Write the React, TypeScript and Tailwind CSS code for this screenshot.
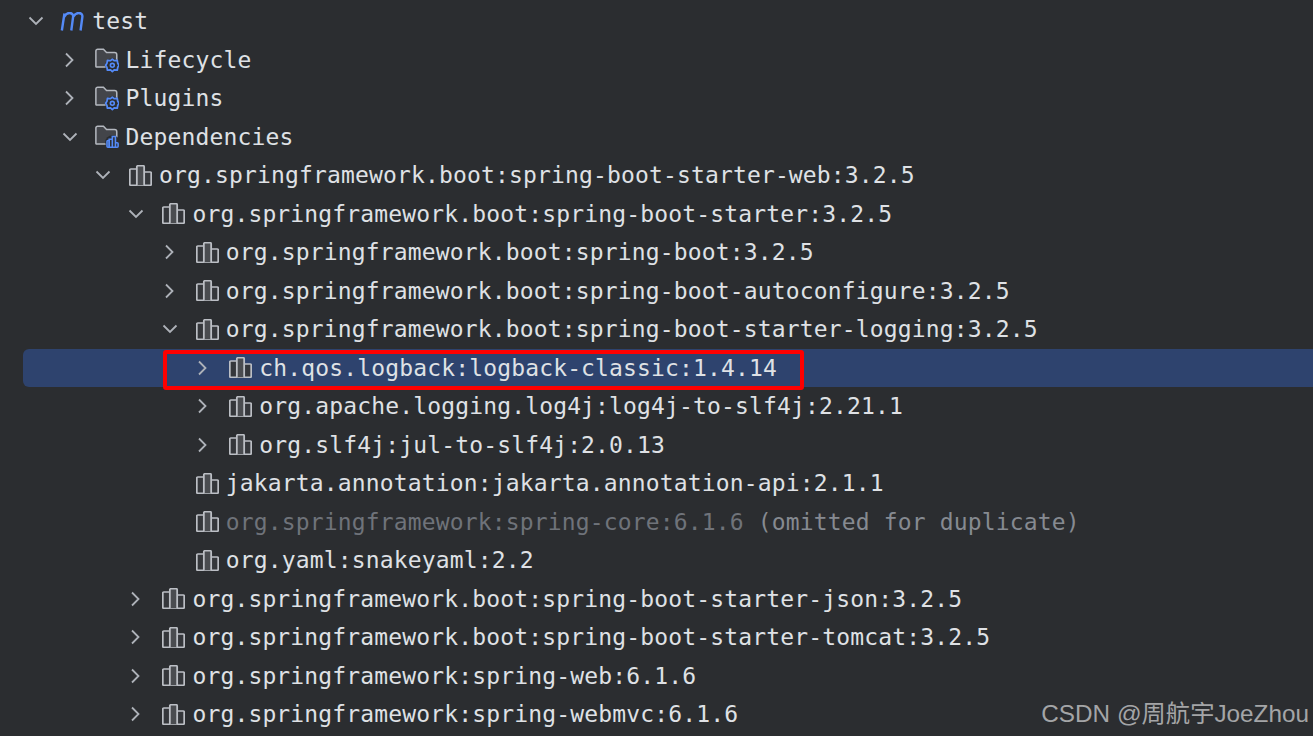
const mono = "font-['DejaVu_Sans_Mono','Liberation_Mono',monospace]";

function Chevron({ open }: { open: boolean }) {
  return (
    <svg width="16" height="16" viewBox="0 0 16 16" fill="none" stroke="#aeb2b9" strokeWidth="1.800">
      {open ? <path d="M1.500 4.500L8 11l6.500-6.500" /> : <path d="M4 1.500L10.500 8 4 14.500" />}
    </svg>
  );
}

function Bars() {
  return (
    <svg width="23" height="21" viewBox="0 0 22 21" preserveAspectRatio="none" fill="none" stroke="#bcbfc5" strokeWidth="1.700" className="max-w-none -ml-[1px]">
      <path d="M7.500 4H1.750a1 1 0 0 0-1 1v14.250a1 1 0 0 0 1 1h18.500a1 1 0 0 0 1-1V8a1 1 0 0 0-1-1H14.500" fill="#35373b" />
      <path d="M7.500 20.250V1.750a1 1 0 0 1 1-1h5a1 1 0 0 1 1 1v18.500" fill="#4a4c50" />
    </svg>
  );
}

function Maven() {
  return (
    <svg width="29" height="19" viewBox="0 0 27 19" preserveAspectRatio="none" fill="none" stroke="#548af7" strokeWidth="2.600" className="max-w-none -ml-[3px]">
      <path d="M2 18.500L4.800 1.500M4.300 5C6 2.200 9 .9 11 1.100c2.500.2 3.500 2 3.100 4.200L12.200 18.500M14 5C16 2.200 19 .9 21 1.100c2.500.2 3.500 2 3.100 4.200L22.200 18.500" />
    </svg>
  );
}

function Folder({ kind }: { kind: 'gear' | 'bars' }) {
  return (
    <svg width="27" height="26" viewBox="0 0 27 26" fill="none" className="max-w-none -ml-[2px]">
      <path d="M1 20V3A2 2 0 0 1 3 1h6.500l3.500 3.500h9A2.500 2.500 0 0 1 24.500 7v12.500A1.500 1.500 0 0 1 23 21H2a1 1 0 0 1-1-1z" fill="#43454a" stroke="#b4b8bf" strokeWidth="1.700" />
      <circle cx="19.500" cy="19" r="8" fill="#2b2d30" />
      {kind === 'gear' ? (
        <g stroke="#548af7" strokeWidth="2" strokeLinejoin="round">
          <path d="M19.500 12l2 1.800 3.500-.3.600 3.200 1.400 2.300-1.400 2.300-.6 3.200-3.500-.3-2 1.800-2-1.800-3.500.3-.6-3.200L12 19l1.400-2.300.6-3.200 3.500.3z" />
          <circle cx="19.500" cy="19" r="2.200" strokeWidth="1.800" />
        </g>
      ) : (
        <g stroke="#548af7" strokeWidth="1.800" fill="none">
          <path d="M16 24.500V17h-1.500a1 1 0 0 0-1 1v5.500a1 1 0 0 0 1 1h10.500a1 1 0 0 0 1-1v-3a1 1 0 0 0-1-1H23" />
          <path d="M16 24.500V15.500h3.500v9M19.500 24.500V12.500H23v12" />
        </g>
      )}
    </svg>
  );
}

type Row = { d: number; t: string; c?: 'o' | 'c'; i: 'm' | 'g' | 'd' | 'b'; dim?: string; sel?: boolean };

const rows: Row[] = [
  { d: 0, t: 'test', c: 'o', i: 'm' },
  { d: 1, t: 'Lifecycle', c: 'c', i: 'g' },
  { d: 1, t: 'Plugins', c: 'c', i: 'g' },
  { d: 1, t: 'Dependencies', c: 'o', i: 'd' },
  { d: 2, t: 'org.springframework.boot:spring-boot-starter-web:3.2.5', c: 'o', i: 'b' },
  { d: 3, t: 'org.springframework.boot:spring-boot-starter:3.2.5', c: 'o', i: 'b' },
  { d: 4, t: 'org.springframework.boot:spring-boot:3.2.5', c: 'c', i: 'b' },
  { d: 4, t: 'org.springframework.boot:spring-boot-autoconfigure:3.2.5', c: 'c', i: 'b' },
  { d: 4, t: 'org.springframework.boot:spring-boot-starter-logging:3.2.5', c: 'o', i: 'b' },
  { d: 5, t: 'ch.qos.logback:logback-classic:1.4.14', c: 'c', i: 'b', sel: true },
  { d: 5, t: 'org.apache.logging.log4j:log4j-to-slf4j:2.21.1', c: 'c', i: 'b' },
  { d: 5, t: 'org.slf4j:jul-to-slf4j:2.0.13', c: 'c', i: 'b' },
  { d: 4, t: 'jakarta.annotation:jakarta.annotation-api:2.1.1', i: 'b' },
  { d: 4, t: '', dim: 'org.springframework:spring-core:6.1.6', i: 'b' },
  { d: 4, t: 'org.yaml:snakeyaml:2.2', i: 'b' },
  { d: 3, t: 'org.springframework.boot:spring-boot-starter-json:3.2.5', c: 'c', i: 'b' },
  { d: 3, t: 'org.springframework.boot:spring-boot-starter-tomcat:3.2.5', c: 'c', i: 'b' },
  { d: 3, t: 'org.springframework:spring-web:6.1.6', c: 'c', i: 'b' },
  { d: 3, t: 'org.springframework:spring-webmvc:6.1.6', c: 'c', i: 'b' },
];

const pad = ['pl-[28.2px]', 'pl-[61.6px]', 'pl-[95px]', 'pl-[128.4px]', 'pl-[161.8px]', 'pl-[195.2px]'];

export default function App() {
  return (
    <div className={`h-[736px] w-[1313px] overflow-hidden bg-[#2b2d30] pt-[2px] text-[23px] tracking-[0.15px] text-[#dfe1e5] ${mono} relative`}>
      <div className="flex flex-col">
        {rows.map((r, idx) => (
          <div key={idx} className={`relative flex h-[38.5px] shrink-0 items-center whitespace-nowrap ${pad[r.d]} ${r.sel ? 'ml-[23px] rounded-l-[6px] bg-[#2e436e] !pl-[172.2px]' : ''}`}>
            {r.sel && (
              <div className="absolute left-[140px] top-[1.5px] h-[40px] w-[641px] rounded-[3px] border-[4px] border-[#fe0000]" />
            )}
            <span className="flex w-[16px] shrink-0 justify-center">{r.c && <Chevron open={r.c === 'o'} />}</span>
            <span className="ml-[19px] flex w-[22px] shrink-0 items-center">
              {r.i === 'm' && <Maven />}
              {r.i === 'g' && <Folder kind="gear" />}
              {r.i === 'd' && <Folder kind="bars" />}
              {r.i === 'b' && <Bars />}
            </span>
            <span className="relative ml-[7px]">
              {r.t}
              {r.dim && (
                <>
                  <span className="text-[#6f737a]">{r.dim}</span>
                  <span className="text-[#868a91]"> (omitted for duplicate)</span>
                </>
              )}
            </span>
          </div>
        ))}
      </div>
      <div className="absolute right-[4px] bottom-[8px] font-['Liberation_Sans','Noto_Sans_CJK_SC',sans-serif] text-[24.3px] leading-[28px] tracking-normal text-[#a4a5a7]">
        CSDN @周航宇JoeZhou
      </div>
    </div>
  );
}
